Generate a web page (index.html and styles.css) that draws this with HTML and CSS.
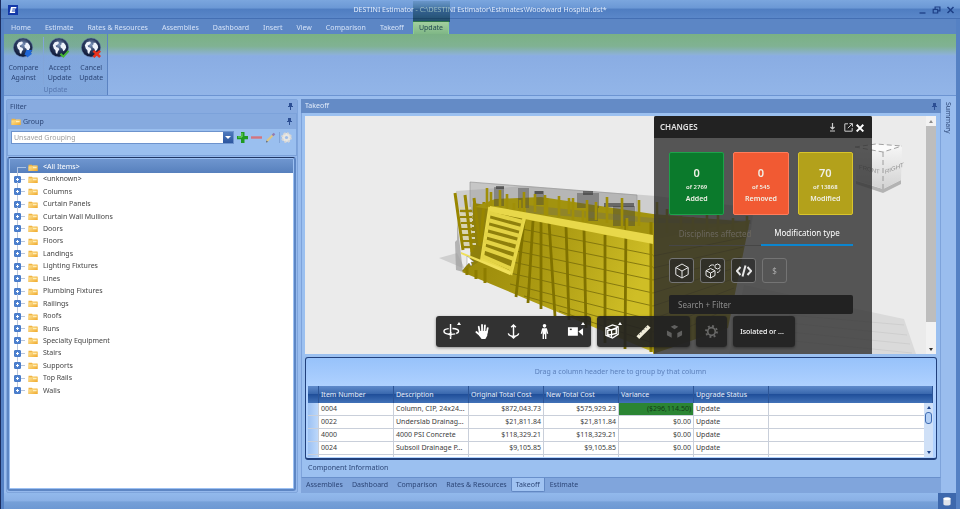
FILE: index.html
```html
<!DOCTYPE html>
<html lang="en">
<head>
    <meta charset="UTF-8">
    <meta name="viewport" content="width=device-width, initial-scale=1.0">
    <title>DESTINI Estimator</title>
    <link rel="stylesheet" href="styles.css">
</head>
<body>
    <!-- shared icons -->
    <svg class="sprite" aria-hidden="true">
        <defs>
            <radialGradient id="globeFill" cx="50%" cy="35%" r="65%">
                <stop offset="0" stop-color="#7f97bd"/>
                <stop offset="0.5" stop-color="#2a3a5e"/>
                <stop offset="1" stop-color="#0b1430"/>
            </radialGradient>
            <linearGradient id="folderFill" x1="0" y1="0" x2="1" y2="1">
                <stop offset="0" stop-color="#ffe9a0"/>
                <stop offset="1" stop-color="#f0a92c"/>
            </linearGradient>
        </defs>
        <symbol id="folder" viewBox="0 0 10 8">
            <path d="M0.5 1.2h3.4l1 1h4.6v5.3h-9z" fill="#f0b544"/>
            <path d="M0.5 7.5V3l4-.2L5.4 2h4.1v5.5z" fill="url(#folderFill)"/>
            <path d="M5 4.2h3.6" stroke="#fff6cf" stroke-width="1"/>
        </symbol>
        <symbol id="globe" viewBox="0 0 22 22">
            <circle cx="10.500" cy="10.500" r="10" fill="url(#globeFill)" stroke="#5d78a8" stroke-width=".6"/>
            <path d="M4 8l2-3 3.500-.8 1 1.600-2 2-1.500.6.500 1.600 2.300.7 1 1.700-1.500 2.300-.8 2.600-1.400-1-.4-3L5 11.500zM13 5.500l2.500 0 2 2.500 .5 2.600-1.300 2.600-1.700 1.300-1-2.600-1.700-1.500-.4-2.200 1.300-1z" fill="#eef3fb"/>
        </symbol>
        <symbol id="pin" viewBox="0 0 5 7">
            <path d="M1 0h3v3h1v1H3v3H2V4H0V3h1z" fill="#2c4f94"/>
        </symbol>
    </svg>

    <header class="titlebar">
        <svg class="app-logo" viewBox="0 0 10 10"><rect width="10" height="10" fill="#1238a8"/><path d="M3 2h5.500l-.4 1.500H4.500L4.300 4.400h3L7 5.600H4L3.700 6.600h3.600L7 8H1.700z" fill="#fff"/></svg>
        <span class="app-title">DESTINI Estimator - C:\DESTINI Estimator\Estimates\Woodward Hospital.dst*</span>
        <div class="window-buttons">
            <button aria-label="Minimize"><svg viewBox="0 0 8 8"><path d="M1 7h6" stroke="#1d3f86" stroke-width="1.300"/></svg></button>
            <button aria-label="Restore"><svg viewBox="0 0 8 8"><path d="M2.600 2.800V1h4.800v3.800H5.500M.7 3.400h4.500v3.600H.7z" fill="none" stroke="#1d3f86" stroke-width="1.200"/></svg></button>
            <button aria-label="Close"><svg viewBox="0 0 8 8"><path d="M1 1l6 6M7 1L1 7" stroke="#1d3f86" stroke-width="1.500"/></svg></button>
        </div>
    </header>

    <nav class="menu">
        <a href="#">Home</a>
        <a href="#">Estimate</a>
        <a href="#">Rates &amp; Resources</a>
        <a href="#">Assemblies</a>
        <a href="#">Dashboard</a>
        <a href="#">Insert</a>
        <a href="#">View</a>
        <a href="#">Comparison</a>
        <a href="#">Takeoff</a>
        <a href="#" class="active">Update</a>
    </nav>

    <section class="ribbon">
        <div class="ribbon-group">
            <div class="ribbon-buttons">
                <button>
                    <svg viewBox="0 0 22 22"><use href="#globe"/><path d="M14 13l6 0-1.500 3 1.500 1-5 4-1-2-2-1z" fill="#1f66d8"/></svg>
                    Compare<br>Against
                </button>
                <button>
                    <svg viewBox="0 0 22 22"><use href="#globe"/><path d="M12 17l3 3 5.500-6" fill="none" stroke="#46b436" stroke-width="2.200"/></svg>
                    Accept<br>Update
                </button>
                <button>
                    <svg viewBox="0 0 22 22"><use href="#globe"/><path d="M13 14l7 6.500M20 14l-7 6.500" stroke="#e8321c" stroke-width="2.800"/></svg>
                    Cancel<br>Update
                </button>
            </div>
            <div class="ribbon-label">Update</div>
        </div>
    </section>

    <main class="workspace">
        <aside class="filter">
            <h2 class="panel-title">Filter <svg class="pin"><use href="#pin"/></svg></h2>
            <div class="group">
                <h3 class="group-title"><svg class="folder"><use href="#folder"/></svg>Group <svg class="pin"><use href="#pin"/></svg></h3>
                <div class="group-tools">
                    <div class="combo">
                        <select aria-label="Grouping"><option>Unsaved Grouping</option></select>
                        <span class="combo-arrow"></span>
                    </div>
                    <button aria-label="Add"><svg viewBox="0 0 11 11"><path d="M4 0h3.500v4H11v3.200H7.500V11H4V7.200H0V4h4z" fill="#1f9a22"/><path d="M5 1v4H1" stroke="#7ddc6d" fill="none"/></svg></button>
                    <button aria-label="Remove"><svg viewBox="0 0 11 11"><path d="M0 4.300h11v2.400H0z" fill="#d4747e"/></svg></button>
                    <button aria-label="Edit"><svg viewBox="0 0 11 11"><path d="M2 9L9 2" stroke="#d9c58a" stroke-width="2.300"/><path d="M7.500 3.500l2-2" stroke="#8d7bb8" stroke-width="2.300"/><path d="M1 10.500l.5-2 1.500 1.500z" fill="#5c5c5c"/></svg></button>
                    <button class="gear" aria-label="Settings"><svg viewBox="0 0 11 11"><circle cx="5.500" cy="5.500" r="4.400" fill="#e9e7e2" stroke="#d5d5d5" stroke-width="2" stroke-dasharray="2 1.450"/><circle cx="5.500" cy="5.500" r="1.600" fill="#9fbdea"/></svg></button>
                </div>
            </div>
            <div class="tree-box">
                <ul class="tree">
                    <li class="selected"><span class="root"></span><svg class="folder"><use href="#folder"/></svg>&lt;All Items&gt;</li>
                    <li><button aria-label="Expand unknown"></button><svg class="folder"><use href="#folder"/></svg>&lt;unknown&gt;</li>
                    <li><button aria-label="Expand Columns"></button><svg class="folder"><use href="#folder"/></svg>Columns</li>
                    <li><button aria-label="Expand Curtain Panels"></button><svg class="folder"><use href="#folder"/></svg>Curtain Panels</li>
                    <li><button aria-label="Expand Curtain Wall Mullions"></button><svg class="folder"><use href="#folder"/></svg>Curtain Wall Mullions</li>
                    <li><button aria-label="Expand Doors"></button><svg class="folder"><use href="#folder"/></svg>Doors</li>
                    <li><button aria-label="Expand Floors"></button><svg class="folder"><use href="#folder"/></svg>Floors</li>
                    <li><button aria-label="Expand Landings"></button><svg class="folder"><use href="#folder"/></svg>Landings</li>
                    <li><button aria-label="Expand Lighting Fixtures"></button><svg class="folder"><use href="#folder"/></svg>Lighting Fixtures</li>
                    <li><button aria-label="Expand Lines"></button><svg class="folder"><use href="#folder"/></svg>Lines</li>
                    <li><button aria-label="Expand Plumbing Fixtures"></button><svg class="folder"><use href="#folder"/></svg>Plumbing Fixtures</li>
                    <li><button aria-label="Expand Railings"></button><svg class="folder"><use href="#folder"/></svg>Railings</li>
                    <li><button aria-label="Expand Roofs"></button><svg class="folder"><use href="#folder"/></svg>Roofs</li>
                    <li><button aria-label="Expand Runs"></button><svg class="folder"><use href="#folder"/></svg>Runs</li>
                    <li><button aria-label="Expand Specialty Equipment"></button><svg class="folder"><use href="#folder"/></svg>Specialty Equipment</li>
                    <li><button aria-label="Expand Stairs"></button><svg class="folder"><use href="#folder"/></svg>Stairs</li>
                    <li><button aria-label="Expand Supports"></button><svg class="folder"><use href="#folder"/></svg>Supports</li>
                    <li><button aria-label="Expand Top Rails"></button><svg class="folder"><use href="#folder"/></svg>Top Rails</li>
                    <li><button aria-label="Expand Walls"></button><svg class="folder"><use href="#folder"/></svg>Walls</li>
                </ul>
            </div>
        </aside>

        <section class="takeoff">
            <h2 class="panel-title dark">Takeoff <svg class="pin"><use href="#pin"/></svg></h2>
            <div class="takeoff-body">
                <div class="viewer">
                    <div class="canvas">
                        <svg class="model" viewBox="305 116 623 238" preserveAspectRatio="xMidYMin slice">
                            <defs>
                                <linearGradient id="wall" x1="0" y1="0" x2="1" y2="0.300">
                                    <stop offset="0" stop-color="#978608"/>
                                    <stop offset="0.500" stop-color="#ab9a12"/>
                                    <stop offset="1" stop-color="#cfbe26"/>
                                </linearGradient>
                                <linearGradient id="cube" x1="0" y1="0" x2="0" y2="1">
                                    <stop offset="0" stop-color="#f6f6f6"/>
                                    <stop offset="1" stop-color="#d2d2d2"/>
                                </linearGradient>
                            </defs>
                            <!-- ground shadows -->
                            <path d="M440 258l18-5 8 16z" fill="#cfcfcf"/>
                            <path d="M745 285l160 34 12 35H730z" fill="#dadada"/>
                            <path d="M790 315l115 10M780 322l128 13M770 330l141 14M765 338l148 15" stroke="#c6c6c6" stroke-width=".6" fill="none"/>
                            <!-- existing building, ghosted -->
                            <path d="M471 182l167 13v30l-167-14z" fill="#8b8b8b" fill-opacity=".38" stroke="#8f8f8f" stroke-width=".6"/>
                            <path d="M457 191l70-5 130 10 98 12-3 22-100 12-193-30z" fill="#999" fill-opacity=".35"/>
                            <!-- left return -->
                            <path d="M458 220l6 52-7-2-1-28 2-2z" fill="#9b9b9b" fill-opacity=".7"/>
                            <path d="M474 203l14 2 36 9v80l-61-23 8-10z" fill="#8f800c"/>
                            <path d="M460 208h12M461 214h13M461 220h13M462 226h13M463 232h13M464 238h12M465 244h12" stroke="#d8d4b0" stroke-width="2.200"/>
                            <path d="M461 211h12M461 217h12M462 223h12M462 229h12M463 235h12M464 241h12M464 247h12" stroke="#968508" stroke-width="2.600"/>
                            <path d="M456 193l8 57M466 195l7 57M475 198l6 48M485 202l-3 40" stroke="#988600" stroke-width="3"/>
                            <!-- top slab -->
                            <path d="M476 207l20-8 46-2 112 17 97 8-97 22-130-30z" fill="#a2930f"/>
                            <path d="M495 187h10v19h-10zM519 188h11v20h-11zM535 191h10v14h-10zM578 193h22v15h-22zM614 206h22v20h-22zM587 199h12v22h-12z" fill="#3d3d3d" fill-opacity=".4"/>
                            <path d="M497 186h8v3h-8zM536 191h8v3h-8zM584 191h10v4h-10zM605 203h30v4h-30z" fill="#333" fill-opacity=".6"/>
                            <path d="M527 205l127 13 98 2v4l-98-1-127-10z" fill="#666" fill-opacity=".3"/>
                            <!-- main face -->
                            <path d="M524 214l130 28v110L463 272l20-12 29 14z" fill="url(#wall)"/>
                            <path d="M654 240l97-20-22 108-75 26z" fill="#a79611"/>
                            <path d="M523 229l131 26M520 240l134 27M517 251l137 29M514 262l140 31M511 273l143 33M511 284l143 36M525 296l129 36M560 311l94 32" stroke="#75690a" stroke-width=".8" fill="none"/>
                            <path d="M654 256l93-19M654 268l90-21M654 280l88-23M654 293l85-26M654 306l83-28M654 319l81-31M654 332l79-34M654 344l76-36" stroke="#736708" stroke-width=".8" fill="none"/>
                            <path d="M525 221l-8 76M534 221l-5 82M542 222v87M550 222l6 94M567 226l3 94M585 230l2 98M606 235v108M627 219l-1 130" stroke="#807200" stroke-width="2.800" fill="none"/>
                            <path d="M468 268v7M477 270v9M486 268v15M652 222v130" stroke="#8d7d00" stroke-width="3"/>
                            <!-- posts above the slab -->
                            <path d="M488 188v19M492 192v16M501 190v17M508 194v15M515 203v9M521 200v15M525 192v24M536 194v18M546 195v20M548 198v18M560 196v21M570 198v16M574 198v22M584 210v20M588 200v22M597 202v18M608 197v26M623 198v30M628 218v20M640 200v26M658 202v28M668 209v24M682 216v16M694 217v18M708 212v22M719 215v19M734 218v17M748 216v14" stroke="#a08f08" stroke-width="2.600"/>
                            <!-- highlighted band and stair panel -->
                            <path d="M491 206l163 29v9l-164-32z" fill="#e8d84a"/>
                            <path d="M491 207l-8 52 29 14 14-58" fill="none" stroke="#e8d84a" stroke-width="3.500"/>
                            <path d="M490 213l34 9M489 220l33 9M488 227l33 9M486 234l33 9M485 241l32 10M484 248l31 11M483 256l30 13" stroke="#e3d345" stroke-width="4"/>
                            <path d="M462 252l50 20-1 3-49-21z" fill="#f0e05a"/>
                            <!-- cursor -->
                            <path d="M468 256v9l2-2 2 3 1-1-1-3h3z" fill="#fff" stroke="#777" stroke-width=".4"/>
                            <!-- view cube -->
                            <path d="M857 181l27 8 18-9v4l-18 9-27-9z" fill="#b3b3b3"/>
                            <path d="M856 147l21-3 26 2-19 6z" fill="#fbfbfb"/>
                            <path d="M856 147l28 5v37l-27-9z" fill="url(#cube)"/>
                            <path d="M884 152l19-6-1 34-18 9z" fill="url(#cube)"/>
                            <path d="M856 147l28 5 19-6M884 152v37M856 147l21-3 26 2" fill="none" stroke="#8c8c8c" stroke-width=".8" stroke-dasharray="5 3"/>
                            <text class="cube-text" transform="translate(860 169) skewY(13)">FRONT</text>
                            <text class="cube-text" transform="translate(886 174) skewY(-22)">RIGHT</text>
                        </svg>

                        <div class="changes">
                            <div class="changes-head">
                                <h4>CHANGES</h4>
                                <button aria-label="Download"><svg viewBox="0 0 9 9"><path d="M4.500 0v5.500M2.500 4l2 2 2-2M2 8h5" fill="none" stroke="#ccc" stroke-width="1.200"/></svg></button>
                                <button aria-label="Open in window"><svg viewBox="0 0 9 9"><path d="M4 .8H.8v7.400h7.400V5M5.500.6h3v3M8.300.8L3.800 5.200" fill="none" stroke="#ccc" stroke-width="1"/></svg></button>
                                <button aria-label="Close changes"><svg viewBox="0 0 9 9"><path d="M1.500 2.500l6 6M7.500 2.500l-6 6" stroke="#fff" stroke-width="1.700"/></svg></button>
                            </div>
                            <div class="cards">
                                <button class="card added"><b>0</b><small>of 2769</small><span>Added</span></button>
                                <button class="card removed"><b>0</b><small>of 545</small><span>Removed</span></button>
                                <button class="card modified"><b>70</b><small>of 13868</small><span>Modified</span></button>
                            </div>
                            <div class="changes-tabs">
                                <button>Disciplines affected</button>
                                <button class="active">Modification type</button>
                            </div>
                            <div class="types">
                                <button aria-label="Geometry"><svg viewBox="0 0 16 16"><path d="M8 1l6.200 3.500v7L8 15l-6.200-3.500v-7zM1.800 4.500L8 8l6.200-3.500M8 8v7"/></svg></button>
                                <button aria-label="Location"><svg viewBox="0 0 16 16"><path d="M5.500 5.500l4.500 2.200v4.800L5.500 15 1 12.500V7.700zM1 7.700L5.500 10 10 7.700M5.500 10v5M4 4c1-2 3-2.500 5-1.800M12 9.500c2 0 3-1.500 3-3M12.500 1l2.500 1.200v2.600L12.500 6 10 4.800V2.200z"/></svg></button>
                                <button aria-label="Properties"><svg viewBox="0 0 16 16"><path d="M4.500 4L.8 8l3.700 4M11.500 4l3.700 4-3.700 4M9.500 2.500l-3 11" class="heavy"/></svg></button>
                                <button class="off">$</button>
                            </div>
                            <input class="search" type="text" placeholder="Search + Filter" aria-label="Search + Filter">
                        </div>

                        <div class="toolbars">
                            <div class="toolbar">
                                <button class="more" aria-label="Orbit"><svg viewBox="0 0 18 18"><path d="M8 1v10M8 14v3M6 6c-3 .3-5 1.300-5 2.800C1 11 5 12 9 12l4-.5M10 5.800c4 .2 6.500 1.400 6.500 3 0 1-1 1.800-2.500 2.300" fill="none" stroke="#fff" stroke-width="1.500"/><path d="M9 9.500l-4 2.500 4 2.500z" fill="#fff"/></svg></button>
                                <button aria-label="Pan"><svg viewBox="0 0 18 18"><path d="M6 10L5 4M8.500 9V2M11 9.500l.6-7M13.500 10.500l1-5M6.500 13L2.500 9.500" stroke="#fff" stroke-width="1.900" stroke-linecap="round"/><path d="M5.200 8.500h9.200l-.4 5-2 3.500H8l-2.500-3.500z" fill="#fff"/></svg></button>
                                <button aria-label="Zoom"><svg viewBox="0 0 18 18"><path d="M9 2v14M6.500 4.500L9 2l2.500 2.500M6.500 13.500L9 16l2.500-2.500M3.500 11c.5 2 2.500 3 5.500 3s5-1 5.500-3" fill="none" stroke="#fff" stroke-width="1.500"/></svg></button>
                                <button aria-label="First person"><svg viewBox="0 0 18 18"><circle cx="9" cy="3" r="1.900" fill="#fff"/><path d="M6.500 5.500h5l1.500 6h-1.400L11 8.500V17H9.500v-5h-1v5H7V8.500l-.6 3H5z" fill="#fff"/></svg></button>
                                <button class="more" aria-label="Camera"><svg viewBox="0 0 18 18"><path d="M1 4.500h10.500v9H1zM12 9L17 5.500v8z" fill="#fff"/><path d="M3 6h2v1.500H3z" fill="#333"/></svg></button>
                            </div>
                            <div class="toolbar">
                                <button class="more" aria-label="Section"><svg viewBox="0 0 18 18"><path d="M2 5l7-3 6 2v8l-6 4-7-3zM2 5l6 2.500 7-3.500M8 7.500V16" fill="none" stroke="#fff" stroke-width="1.300"/><path d="M4 8l9-2v5l-9 2z" fill="none" stroke="#fff" stroke-width="1.500"/></svg></button>
                                <button aria-label="Measure"><svg viewBox="0 0 18 18"><path d="M1.500 14L13.500 2l3 3-12 12z" fill="#f4f0dc"/><path d="M4 11.500l1 1M6.500 9l1 1M9 6.500l1 1M11.500 4l1 1" stroke="#555"/></svg></button>
                                <button class="dim" aria-label="Explode"><svg viewBox="0 0 18 18"><path d="M5 4l4-2 4 2-4 2.500zM1 8l5 2.500v5L1 13zM17 8l-5 2.500v5l5-2.500z" fill="#bbb"/></svg></button>
                            </div>
                            <div class="toolbar">
                                <button class="dim" aria-label="Settings"><svg viewBox="0 0 18 18"><circle cx="9" cy="9" r="4" fill="none" stroke="#ccc" stroke-width="1.800"/><circle cx="9" cy="9" r="5.800" fill="none" stroke="#ccc" stroke-width="2" stroke-dasharray="2 2.550"/></svg></button>
                            </div>
                            <div class="toolbar">
                                <button class="isolated">Isolated or ...</button>
                            </div>
                        </div>
                    </div>
                    <div class="view-scroll"><i class="up"></i><span></span><i class="down"></i></div>
                </div>

                <div class="grid-box">
                    <div class="group-hint">Drag a column header here to group by that column</div>
                    <div class="grid-wrap">
                        <table class="grid">
                            <colgroup>
                                <col class="mark"><col class="data"><col class="data"><col class="data"><col class="data"><col class="data"><col class="data"><col>
                            </colgroup>
                            <thead>
                                <tr><th></th><th>Item Number</th><th>Description</th><th>Original Total Cost</th><th>New Total Cost</th><th>Variance</th><th>Upgrade Status</th><th></th></tr>
                            </thead>
                            <tbody>
                                <tr><td></td><td>0004</td><td>Column, CIP, 24x24...</td><td class="num">$872,043.73</td><td class="num">$575,929.23</td><td class="num saved">($296,114.50)</td><td>Update</td><td></td></tr>
                                <tr><td></td><td>0022</td><td>Underslab Drainag...</td><td class="num">$21,811.84</td><td class="num">$21,811.84</td><td class="num">$0.00</td><td>Update</td><td></td></tr>
                                <tr><td></td><td>4000</td><td>4000 PSI Concrete</td><td class="num">$118,329.21</td><td class="num">$118,329.21</td><td class="num">$0.00</td><td>Update</td><td></td></tr>
                                <tr><td></td><td>0024</td><td>Subsoil Drainage P...</td><td class="num">$9,105.85</td><td class="num">$9,105.85</td><td class="num">$0.00</td><td>Update</td><td></td></tr>
                                <tr class="cut"><td></td><td></td><td></td><td></td><td></td><td></td><td></td><td></td></tr>
                            </tbody>
                        </table>
                        <div class="grid-scroll"><i class="up"></i><span></span><i class="down"></i></div>
                    </div>
                </div>
                <div class="component-info">Component Information</div>
            </div>
            <nav class="bottom-tabs">
                <a href="#">Assemblies</a>
                <a href="#">Dashboard</a>
                <a href="#">Comparison</a>
                <a href="#">Rates &amp; Resources</a>
                <a href="#" class="active">Takeoff</a>
                <a href="#">Estimate</a>
            </nav>
        </section>

        <aside class="summary"><a href="#">Summary</a></aside>
    </main>

    <footer class="statusbar">
        <span class="db"><svg viewBox="0 0 8 10"><path d="M0 2c0-2 8-2 8 0v6c0 2-8 2-8 0z" fill="#dfe3ea"/><ellipse cx="4" cy="2" rx="4" ry="1.500" fill="#fff"/></svg></span>
    </footer>
</body>
</html>
```

FILE: styles.css
```css
* {
    box-sizing: border-box;
}
body {
    display: flex;
    flex-direction: column;
    height: 100vh;
    margin: 0;
    padding: 0 4px 0 3px;
    border-left: 1px solid #1b2d60;
    background-color: #5581c4;
    color: #2c4677;
    font-family: "Noto Sans", "Open Sans", sans-serif;
    font-size: 7px;
    line-height: 10px;
    overflow: hidden;
}
a {
    color: inherit;
    text-decoration: none;
}
button {
    margin: 0;
    padding: 0;
    border: none;
    background: none;
    color: inherit;
    font: inherit;
    cursor: pointer;
}
svg {
    display: block;
}
h2, h3, h4 {
    margin: 0;
    font-size: 7px;
    font-weight: normal;
}
.sprite {
    position: absolute;
    width: 0;
    height: 0;
}
.pin {
    width: 5px;
    height: 7px;
    margin-left: auto;
}
.folder {
    width: 10px;
    height: 9px;
}

/* title bar and menu */
.titlebar {
    display: flex;
    align-items: center;
    height: 19px;
    margin: 0 -4px 0 -3px;
    padding: 2px 5px 0 7px;
    background: linear-gradient(#7ba6de, #6b98d5 45%, #4f7dc1 50%, #5a87c9);
    border-bottom: 1px solid #446fb3;
}
.app-logo {
    width: 10px;
    height: 10px;
}
.app-title {
    flex: 1;
    padding-left: 24px;
    color: #e2ecfb;
    text-align: center;
}
.window-buttons {
    display: flex;
    gap: 5px;
}
.window-buttons svg {
    width: 9px;
    height: 8px;
}
.menu {
    display: flex;
    height: 15px;
    background-color: #5c86c5;
    color: #d5e3f8;
}
.menu a {
    padding: 4px 7px 0;
}
.menu .active {
    position: relative;
    margin: 2px 0 0 2px;
    padding: 1px 5px 0;
    border: 1px solid #8dcf8e;
    border-bottom: none;
    background: linear-gradient(#a3cf9f, #7fb786);
    color: #234a52;
}
/* green glow that runs up into the title bar */
.menu .active::before {
    content: "";
    position: absolute;
    left: -1px;
    right: -2px;
    bottom: 100%;
    height: 21px;
    background: linear-gradient(rgba(40, 120, 110, .15), rgba(24, 104, 92, .75));
    mix-blend-mode: multiply;
}

/* ribbon */
.ribbon {
    display: flex;
    height: 62px;
    background: linear-gradient(#7ab184, #80b293 20%, #8db1d8 34%, #8aade3 36%, #92b5e8);
    border-bottom: 1px solid #6c94d2;
}
.ribbon-group {
    display: flex;
    flex-direction: column;
    width: 104px;
    border-right: 1px solid #5b83c2;
    background: linear-gradient(rgba(80, 130, 190, .1), rgba(80, 130, 190, .25));
}
.ribbon-buttons {
    display: flex;
    flex: 1;
    padding-top: 3px;
}
.ribbon-buttons button {
    display: flex;
    flex: 1;
    flex-direction: column;
    align-items: center;
    justify-content: flex-start;
}
.ribbon-buttons button:first-child {
    flex: 0 0 40px;
    border-right: 1px solid #82a5d9;
}
.ribbon-buttons svg {
    width: 21px;
    height: 22px;
    margin-bottom: 4px;
}
.ribbon-label {
    color: #5677b0;
    text-align: center;
}

/* workspace */
.workspace {
    display: flex;
    flex: 1;
    gap: 3px;
    min-height: 0;
    padding: 3px 0 0 2px;
    background-color: #9abdee;
}
.panel-title {
    display: flex;
    align-items: center;
    height: 14px;
    padding: 0 4px 0 3px;
    background-color: #88abe0;
}
.panel-title.dark {
    padding: 0 4px;
    background-color: #648bc6;
    color: #e2ecfa;
}
.filter {
    display: flex;
    flex: 0 0 292px;
    flex-direction: column;
    border: 1px solid #7fa5dc;
    border-radius: 2px;
    background-color: #94b8ec;
}
.filter .panel-title {
    height: 13px;
}
.group {
    height: 43px;
    border: 1px solid #7ca2da;
    background-color: #9abfef;
}
.group-title {
    display: flex;
    align-items: center;
    gap: 2px;
    height: 15px;
    padding: 0 4px 0 3px;
    background-color: #86aadf;
}
.group-tools {
    display: flex;
    align-items: center;
    gap: 3px;
    padding: 2px 4px 0 3px;
}
.group-tools svg {
    width: 11px;
    height: 11px;
}
.group-tools .gear {
    padding-left: 1px;
    border-left: 1px solid #82a5d8;
}
.combo {
    position: relative;
    flex: 1;
}
.combo select {
    display: block;
    width: 100%;
    height: 13px;
    padding: 0 2px;
    border: 1px solid #6d93cd;
    border-radius: 0;
    background-color: #fff;
    color: #a0a0a0;
    font: inherit;
    appearance: none;
}
.combo-arrow {
    position: absolute;
    top: 1px;
    right: 1px;
    width: 10px;
    height: 11px;
    background: linear-gradient(#4d79bd, #2c569f);
    pointer-events: none;
}
.combo-arrow::after {
    content: "";
    position: absolute;
    top: 4px;
    left: 2px;
    border: 3px solid transparent;
    border-top-color: #fff;
    border-bottom: none;
}

/* tree */
.tree-box {
    flex: 1;
    min-height: 0;
    margin: 1px 1px 1px 0;
    padding: 1px;
    border: 2px solid #5d86c4;
    border-top: 1px solid #1f3766;
    border-radius: 3px;
    background-color: #9cc0f2;
}
.tree {
    display: grid;
    grid-template-rows: 14px;
    grid-auto-rows: 1fr;
    align-content: start;
    height: 100%;
    margin: 0;
    padding: 0 0 91px;
    background-color: #fff;
    color: #444;
    list-style: none;
}
.tree li {
    position: relative;
    display: flex;
    align-items: center;
    padding-left: 4px;
}
.tree .folder {
    margin: 0 5px 0 7px;
}
.tree .selected {
    padding-top: 2px;
    background: linear-gradient(#6f96cf, #5780bd);
    color: #fff;
}
.tree button,
.tree .root {
    position: relative;
    width: 7px;
    height: 7px;
}
.tree button {
    border: 1px solid #4a7cc8;
    border-radius: 1px;
    background: linear-gradient(#fff, #fff) center / 3px 1px no-repeat,
        linear-gradient(#fff, #fff) center / 1px 3px no-repeat, #4c80cf;
}
/* connector lines */
.tree button::after {
    content: "";
    position: absolute;
    top: 2px;
    left: 6px;
    width: 4px;
    height: 1px;
    background-color: #b9c6dc;
}
.tree .root::after {
    content: "";
    position: absolute;
    top: 3px;
    left: 3px;
    width: 8px;
    height: 6px;
    border-top: 1px solid #a9c2e6;
    border-left: 1px solid #a9c2e6;
}
.tree li + li::before {
    content: "";
    position: absolute;
    top: -3px;
    left: 7px;
    width: 1px;
    height: 6px;
    background-color: #b9c6dc;
}

/* takeoff */
.takeoff {
    display: flex;
    flex: 1;
    flex-direction: column;
    min-width: 0;
}
.takeoff-body {
    display: flex;
    flex: 1;
    flex-direction: column;
    min-height: 0;
    padding: 3px 4px 0 3px;
    border: 1px solid #7ea3db;
    border-top: none;
    border-bottom-color: #6990cb;
    background-color: #9bc0f0;
}
.viewer {
    display: flex;
    flex: 1;
    min-height: 0;
}
.canvas {
    position: relative;
    flex: 1;
    overflow: hidden;
    background-color: #ebebeb;
}
.model {
    width: 100%;
    height: 100%;
}
.cube-text {
    fill: #8e8e8e;
    font-family: "Liberation Sans Narrow", "Liberation Sans", sans-serif;
    font-size: 6px;
}
.view-scroll {
    display: flex;
    flex-direction: column;
    width: 10px;
    background-color: #f2f2f2;
}
.view-scroll span {
    flex: 1;
    margin-bottom: 26px;
    background-color: #bdbdbd;
}
.up, .down {
    display: block;
    align-self: center;
    border: 2px solid transparent;
}
.up {
    border-top: none;
    border-bottom: 3px solid #8a8a8a;
}
.down {
    border-bottom: none;
    border-top: 3px solid #333;
}
.view-scroll .up {
    margin: 4px 0 3px;
}
.view-scroll .down {
    margin-bottom: 3px;
}

/* changes panel over the model */
.changes {
    position: absolute;
    top: 0;
    right: 54px;
    bottom: 0;
    width: 218px;
    border-radius: 2px 2px 0 0;
    background-color: rgba(47, 47, 47, .8);
    color: #fff;
}
.changes-head {
    display: flex;
    align-items: center;
    gap: 7px;
    height: 22px;
    padding: 0 7px 0 6px;
    border-radius: 2px 2px 0 0;
    background-color: #222;
}
.changes-head h4 {
    flex: 1;
    color: #e4e4e4;
    font-size: 8px;
    font-weight: 600;
}
.changes-head svg {
    width: 9px;
    height: 9px;
}
.changes-head button:last-child {
    margin-left: -5px;
}
.changes-head button:last-child svg {
    width: 10px;
    height: 10px;
}
.cards {
    display: flex;
    gap: 9px;
    padding: 14px 19px 0 15px;
}
.card {
    display: flex;
    flex: 1;
    flex-direction: column;
    align-items: center;
    height: 63px;
    padding-top: 13px;
    border: 1px solid;
    border-radius: 2px;
    color: #f0f0e6;
    font-weight: 600;
}
.card b {
    font-size: 11px;
    font-weight: 600;
    line-height: 14px;
}
.card small {
    margin: 3px 0 2px;
    font-size: 6px;
    line-height: 9px;
}
.added {
    border-color: #1da24a;
    background-color: #0b7a2c;
}
.removed {
    border-color: #ff7d5c;
    background-color: #f15a33;
}
.modified {
    border-color: #d9c52c;
    background-color: #b3a11b;
}
.changes-tabs {
    display: flex;
    margin: 9px 19px 0 15px;
}
.changes-tabs button {
    flex: 1;
    height: 22px;
    padding-bottom: 2px;
    border-bottom: 1px solid #464646;
    color: #6b675e;
    font-size: 8px;
}
.changes-tabs .active {
    border-bottom: 2px solid #0b85cf;
    color: #fff;
}
.types {
    display: flex;
    gap: 6px;
    padding: 12px 15px;
}
.types button {
    display: grid;
    place-items: center;
    width: 25px;
    height: 25px;
    border: 1px solid #747474;
    border-radius: 3px;
    background-color: rgba(40, 40, 40, .7);
}
.types svg {
    width: 16px;
    height: 16px;
    fill: none;
    stroke: #e8e8e8;
    stroke-width: 1;
}
.types .heavy {
    stroke-width: 2;
}
.types .off {
    background: none;
    color: #aaa;
    font-size: 8px;
}
.search {
    display: block;
    width: calc(100% - 34px);
    height: 19px;
    margin-left: 15px;
    padding: 0 9px;
    border: none;
    border-radius: 2px;
    background-color: #222;
    color: #ccc;
    font: inherit;
    font-size: 8px;
}
.search::placeholder {
    color: #8d8d8d;
}

/* viewer toolbars */
.toolbars {
    position: absolute;
    right: 0;
    bottom: 7px;
    left: 0;
    display: flex;
    justify-content: center;
    gap: 6px;
}
.toolbar {
    display: flex;
    height: 31px;
    border-radius: 3px;
    background-color: rgba(34, 34, 34, .92);
    box-shadow: 0 1px 3px rgba(0, 0, 0, .4);
    color: #fff;
}
.toolbar button {
    position: relative;
    display: grid;
    place-items: center;
    width: 31px;
}
.toolbar svg {
    width: 17px;
    height: 17px;
}
.toolbar .more::after {
    content: "";
    position: absolute;
    top: 6px;
    right: 6px;
    border: 2px solid transparent;
    border-top: none;
    border-bottom: 3px solid #fff;
}
.toolbar .dim svg {
    opacity: .4;
}
.toolbar .isolated {
    width: 62px;
    padding-right: 4px;
    font-weight: 500;
}

/* cost grid */
.grid-box {
    margin: 3px -1px 0 0;
    padding: 2px 3px 1px 2px;
    border: 1px solid #21407c;
    border-bottom-width: 2px;
    border-radius: 3px;
    background: linear-gradient(#97c2fa, #b0d2ff 30px);
}
.group-hint {
    height: 26px;
    color: #5c80bb;
    line-height: 24px;
    text-align: center;
}
.grid-wrap {
    position: relative;
}
.grid {
    width: 100%;
    border-collapse: separate;
    border-spacing: 0;
    background-color: #fff;
    color: #3c3c3c;
    table-layout: fixed;
}
.grid .mark {
    width: 11px;
}
.grid .data {
    width: 75px;
}
.grid th {
    height: 17px;
    padding: 0 2px;
    border-right: 1px solid #2c5597;
    background: linear-gradient(#5f8bcb, #3a68ae 45%, #204f9a 50%, #4272b8);
    color: #e6eefb;
    font-weight: normal;
    text-align: left;
    white-space: nowrap;
}
.grid td {
    height: 13px;
    padding: 0 2px;
    border-right: 1px solid #c9cfda;
    border-bottom: 1px solid #c9cfda;
    line-height: 12px;
    white-space: nowrap;
    overflow: hidden;
}
.grid td:first-child {
    background: linear-gradient(90deg, #9cc1f3, #bdd8fb);
}
.grid .num {
    text-align: right;
}
.grid .saved {
    background-color: #2b8533;
    color: #123b16;
}
.grid .cut td {
    height: 2px;
    border-bottom: none;
    line-height: 0;
}
.grid-scroll {
    position: absolute;
    top: 17px;
    right: 0;
    bottom: 0;
    display: flex;
    flex-direction: column;
    width: 9px;
    padding: 3px 1px;
    background-color: #cfe0f7;
}
.grid-scroll span {
    height: 12px;
    margin: 3px 0 auto;
    border: 1px solid #3f6cb3;
    border-radius: 3px;
    background-color: #b4d0f5;
}
.grid-scroll .up {
    border-bottom-color: #1d448c;
}
.grid-scroll .down {
    border-top-color: #1d448c;
}
.component-info {
    padding: 3px 3px 4px;
}
.bottom-tabs {
    display: flex;
    height: 15px;
    background-color: #80a5dc;
}
.bottom-tabs a {
    padding: 2px 4px 0 5px;
}
.bottom-tabs .active {
    height: 14px;
    padding: 2px 4px 0;
    border: 1px solid #6288c3;
    border-top: none;
    border-radius: 0 0 2px 2px;
    background-color: #a0c3f2;
}
.summary {
    width: 12px;
    padding: 3px 3px 0 0;
    font-size: 7px;
    writing-mode: vertical-rl;
}

.statusbar {
    display: flex;
    justify-content: flex-end;
    height: 16px;
    background: linear-gradient(#92b9ec, #8ab0e5 50%, #76a0d8 55%, #6d98d3);
}
.db {
    display: grid;
    place-items: center;
    width: 18px;
    background-color: #3d68ad;
}
.db svg {
    width: 8px;
    height: 9px;
}
```
